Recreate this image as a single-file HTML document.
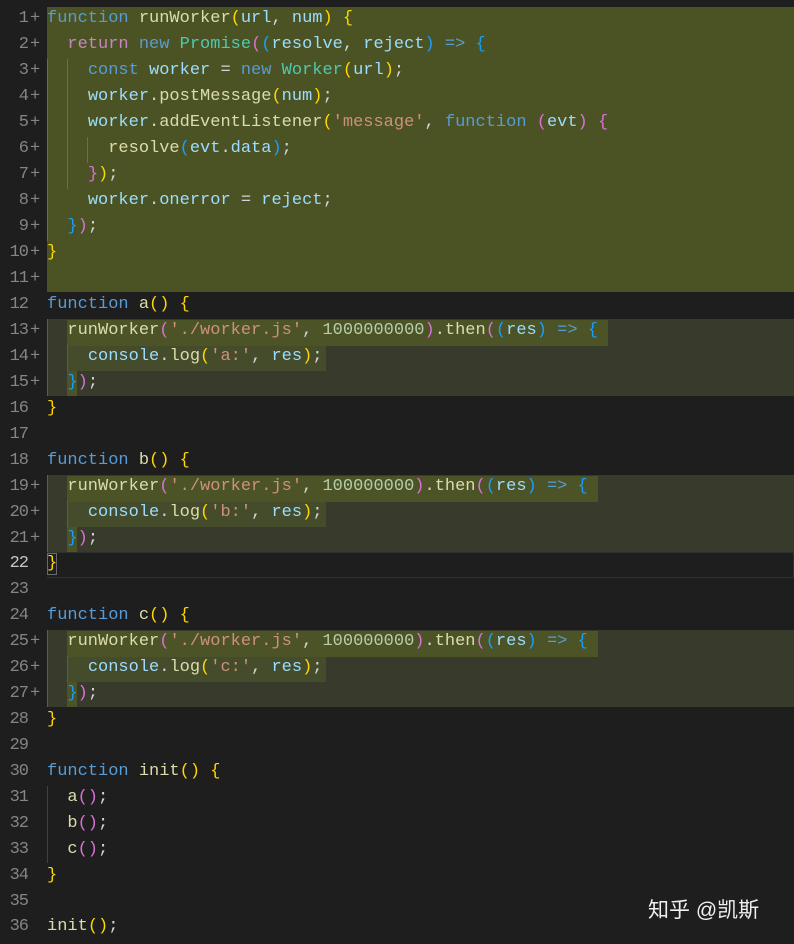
<!DOCTYPE html>
<html><head><meta charset="utf-8"><style>
body{margin:0;background:#1e1e1e;width:794px;height:944px;overflow:hidden;position:relative;font-family:"Liberation Mono",monospace;font-size:17px}
.hl{position:absolute}
.ln{position:absolute;left:0;width:28px;height:26px;line-height:26px;color:#858585;white-space:pre;text-align:right;letter-spacing:-1px}
.ln i{font-style:normal;position:absolute;left:30px;letter-spacing:0}
.c{position:absolute;left:47px;height:26px;line-height:26px;color:#d4d4d4;white-space:pre}
.k{color:#569cd6}.f{color:#dcdcaa}.v{color:#9cdcfe}.s{color:#ce9178}.t{color:#4ec9b0}.r{color:#c586c0}.n{color:#b5cea8}
.y{color:#ffd700}.p{color:#da70d6}.b{color:#179fff}
.g{position:absolute;width:1px;background:#5a5f45}
</style></head><body>
<div class="hl" style="left:47px;top:7px;width:747px;height:285px;background:#4b5324"></div>
<div class="hl" style="left:47px;top:319px;width:747px;height:77px;background:#383b2c"></div>
<div class="hl" style="left:47px;top:475px;width:747px;height:77px;background:#383b2c"></div>
<div class="hl" style="left:47px;top:630px;width:747px;height:77px;background:#383b2c"></div>
<div class="hl" style="left:67px;top:320px;width:541px;height:26px;background:#4b5327"></div>
<div class="hl" style="left:67px;top:346px;width:259px;height:25px;background:#454c2b"></div>
<div class="hl" style="left:67px;top:371px;width:10px;height:25px;background:#4b5327"></div>
<div class="hl" style="left:67px;top:476px;width:531px;height:26px;background:#4b5327"></div>
<div class="hl" style="left:67px;top:502px;width:259px;height:25px;background:#454c2b"></div>
<div class="hl" style="left:67px;top:527px;width:10px;height:25px;background:#4b5327"></div>
<div class="hl" style="left:67px;top:631px;width:531px;height:26px;background:#4b5327"></div>
<div class="hl" style="left:67px;top:657px;width:259px;height:25px;background:#454c2b"></div>
<div class="hl" style="left:67px;top:682px;width:10px;height:25px;background:#4b5327"></div>
<div class="hl" style="left:47px;top:552px;width:746px;height:24px;border:1px solid #303030;border-left:none"></div>
<div class="hl" style="left:47px;top:553px;width:10px;height:22px;border:1px solid #6a6a6a;box-sizing:border-box"></div>
<div class="g" style="left:47px;top:59px;height:182px;background:#6b7240"></div>
<div class="g" style="left:67px;top:59px;height:130px;background:#6b7240"></div>
<div class="g" style="left:87px;top:137px;height:26px;background:#6b7240"></div>
<div class="g" style="left:47px;top:319px;height:77px"></div>
<div class="g" style="left:67px;top:345px;height:26px"></div>
<div class="g" style="left:47px;top:475px;height:77px"></div>
<div class="g" style="left:67px;top:501px;height:26px"></div>
<div class="g" style="left:47px;top:630px;height:77px"></div>
<div class="g" style="left:67px;top:656px;height:26px"></div>
<div class="g" style="left:47px;top:786px;height:77px;background:#404040"></div>

<div class="ln" style="top:6px">1<i>+</i></div><div class="c" style="top:6px"><span class="k">function</span> <span class="f">runWorker</span><span class="y">(</span><span class="v">url</span>, <span class="v">num</span><span class="y">)</span> <span class="y">{</span></div>
<div class="ln" style="top:32px">2<i>+</i></div><div class="c" style="top:32px">  <span class="r">return</span> <span class="k">new</span> <span class="t">Promise</span><span class="p">(</span><span class="b">(</span><span class="v">resolve</span>, <span class="v">reject</span><span class="b">)</span> <span class="k">=&gt;</span> <span class="b">{</span></div>
<div class="ln" style="top:58px">3<i>+</i></div><div class="c" style="top:58px">    <span class="k">const</span> <span class="v">worker</span> = <span class="k">new</span> <span class="t">Worker</span><span class="y">(</span><span class="v">url</span><span class="y">)</span>;</div>
<div class="ln" style="top:84px">4<i>+</i></div><div class="c" style="top:84px">    <span class="v">worker</span>.<span class="f">postMessage</span><span class="y">(</span><span class="v">num</span><span class="y">)</span>;</div>
<div class="ln" style="top:110px">5<i>+</i></div><div class="c" style="top:110px">    <span class="v">worker</span>.<span class="f">addEventListener</span><span class="y">(</span><span class="s">'message'</span>, <span class="k">function</span> <span class="p">(</span><span class="v">evt</span><span class="p">)</span> <span class="p">{</span></div>
<div class="ln" style="top:136px">6<i>+</i></div><div class="c" style="top:136px">      <span class="f">resolve</span><span class="b">(</span><span class="v">evt</span>.<span class="v">data</span><span class="b">)</span>;</div>
<div class="ln" style="top:162px">7<i>+</i></div><div class="c" style="top:162px">    <span class="p">}</span><span class="y">)</span>;</div>
<div class="ln" style="top:188px">8<i>+</i></div><div class="c" style="top:188px">    <span class="v">worker</span>.<span class="v">onerror</span> = <span class="v">reject</span>;</div>
<div class="ln" style="top:214px">9<i>+</i></div><div class="c" style="top:214px">  <span class="b">}</span><span class="p">)</span>;</div>
<div class="ln" style="top:240px">10<i>+</i></div><div class="c" style="top:240px"><span class="y">}</span></div>
<div class="ln" style="top:266px">11<i>+</i></div>
<div class="ln" style="top:292px">12</div><div class="c" style="top:292px"><span class="k">function</span> <span class="f">a</span><span class="y">()</span> <span class="y">{</span></div>
<div class="ln" style="top:318px">13<i>+</i></div><div class="c" style="top:318px">  <span class="f">runWorker</span><span class="p">(</span><span class="s">'./worker.js'</span>, <span class="n">1000000000</span><span class="p">)</span>.<span class="f">then</span><span class="p">(</span><span class="b">(</span><span class="v">res</span><span class="b">)</span> <span class="k">=&gt;</span> <span class="b">{</span></div>
<div class="ln" style="top:344px">14<i>+</i></div><div class="c" style="top:344px">    <span class="v">console</span>.<span class="f">log</span><span class="y">(</span><span class="s">'a:'</span>, <span class="v">res</span><span class="y">)</span>;</div>
<div class="ln" style="top:370px">15<i>+</i></div><div class="c" style="top:370px">  <span class="b">}</span><span class="p">)</span>;</div>
<div class="ln" style="top:396px">16</div><div class="c" style="top:396px"><span class="y">}</span></div>
<div class="ln" style="top:422px">17</div>
<div class="ln" style="top:448px">18</div><div class="c" style="top:448px"><span class="k">function</span> <span class="f">b</span><span class="y">()</span> <span class="y">{</span></div>
<div class="ln" style="top:474px">19<i>+</i></div><div class="c" style="top:474px">  <span class="f">runWorker</span><span class="p">(</span><span class="s">'./worker.js'</span>, <span class="n">100000000</span><span class="p">)</span>.<span class="f">then</span><span class="p">(</span><span class="b">(</span><span class="v">res</span><span class="b">)</span> <span class="k">=&gt;</span> <span class="b">{</span></div>
<div class="ln" style="top:500px">20<i>+</i></div><div class="c" style="top:500px">    <span class="v">console</span>.<span class="f">log</span><span class="y">(</span><span class="s">'b:'</span>, <span class="v">res</span><span class="y">)</span>;</div>
<div class="ln" style="top:526px">21<i>+</i></div><div class="c" style="top:526px">  <span class="b">}</span><span class="p">)</span>;</div>
<div class="ln" style="top:551px;color:#c6c6c6">22</div><div class="c" style="top:551px"><span class="y">}</span></div>
<div class="ln" style="top:577px">23</div>
<div class="ln" style="top:603px">24</div><div class="c" style="top:603px"><span class="k">function</span> <span class="f">c</span><span class="y">()</span> <span class="y">{</span></div>
<div class="ln" style="top:629px">25<i>+</i></div><div class="c" style="top:629px">  <span class="f">runWorker</span><span class="p">(</span><span class="s">'./worker.js'</span>, <span class="n">100000000</span><span class="p">)</span>.<span class="f">then</span><span class="p">(</span><span class="b">(</span><span class="v">res</span><span class="b">)</span> <span class="k">=&gt;</span> <span class="b">{</span></div>
<div class="ln" style="top:655px">26<i>+</i></div><div class="c" style="top:655px">    <span class="v">console</span>.<span class="f">log</span><span class="y">(</span><span class="s">'c:'</span>, <span class="v">res</span><span class="y">)</span>;</div>
<div class="ln" style="top:681px">27<i>+</i></div><div class="c" style="top:681px">  <span class="b">}</span><span class="p">)</span>;</div>
<div class="ln" style="top:707px">28</div><div class="c" style="top:707px"><span class="y">}</span></div>
<div class="ln" style="top:733px">29</div>
<div class="ln" style="top:759px">30</div><div class="c" style="top:759px"><span class="k">function</span> <span class="f">init</span><span class="y">()</span> <span class="y">{</span></div>
<div class="ln" style="top:785px">31</div><div class="c" style="top:785px">  <span class="f">a</span><span class="p">()</span>;</div>
<div class="ln" style="top:811px">32</div><div class="c" style="top:811px">  <span class="f">b</span><span class="p">()</span>;</div>
<div class="ln" style="top:837px">33</div><div class="c" style="top:837px">  <span class="f">c</span><span class="p">()</span>;</div>
<div class="ln" style="top:863px">34</div><div class="c" style="top:863px"><span class="y">}</span></div>
<div class="ln" style="top:889px">35</div>
<div class="ln" style="top:914px">36</div><div class="c" style="top:914px"><span class="f">init</span><span class="y">()</span>;</div>
<div style="position:absolute;left:648px;top:894px;color:#f0f0f0;font-family:'Liberation Sans','Noto Sans CJK SC',sans-serif;font-size:21px;white-space:pre">知乎 @凯斯</div>
</body></html>
